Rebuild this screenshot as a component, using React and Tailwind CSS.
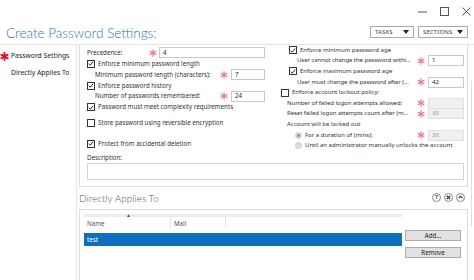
import React from 'react';

const Star = ({ red = false }) => (
  <svg width={red ? 9 : 8} height={red ? 9 : 8} viewBox="0 0 10 10" className="shrink-0">
    <g stroke={red ? '#d4142b' : '#e77d8c'} strokeWidth={red ? 2.2 : 1.6} strokeLinecap="round">
      <line x1="5" y1="1" x2="5" y2="9" />
      <line x1="1.5" y1="3" x2="8.5" y2="7" />
      <line x1="1.5" y1="7" x2="8.5" y2="3" />
    </g>
  </svg>
);

const Check = ({ on = true }) => (
  <span className="w-[8px] h-[8px] border border-[#333] bg-white flex items-center justify-center shrink-0">
    {on && (
      <svg width="7" height="7" viewBox="0 0 8 8">
        <path d="M1 4.2 L3 6.3 L7 1.5" stroke="#222" strokeWidth="1.3" fill="none" />
      </svg>
    )}
  </span>
);

const Radio = ({ on }) => (
  <span className="w-[7px] h-[7px] rounded-full bg-[#dcdcdc] border border-[#cfcfcf] flex items-center justify-center shrink-0">
    {on && <span className="w-[3px] h-[3px] rounded-full bg-[#8a8a8a]" />}
  </span>
);

const Field = ({ value, w, disabled }) => (
  <div
    className={`h-[11px] border flex items-center px-[3px] shrink-0 ${w} ${
      disabled ? 'bg-[#f0f0f0] border-[#e0e0e0] text-[#9a9a9a]' : 'bg-white border-[#c8c8c8] text-[#222]'
    }`}
  >
    {value}
  </div>
);

const CheckRow = ({ on = true, label, cls = '' }) => (
  <div className={`flex items-center gap-[3px] ${cls}`}>
    <Check on={on} />
    <span className="whitespace-nowrap">{label}</span>
  </div>
);

const RightRow = ({ label, value, disabled, indent = 'pl-[16px]' }) => (
  <div className={`h-[10.6px] flex items-center ${indent}`}>
    <span className="flex-1 min-w-0 whitespace-nowrap overflow-hidden tracking-[-0.01em]">{label}</span>
    <div className="flex items-center gap-[3px] ml-[1px]">
      <Star />
      <Field value={value} w="w-[36px]" disabled={disabled} />
    </div>
  </div>
);

const Dropdown = ({ label, w }) => (
  <div className={`h-[12px] border border-[#a8a8a8] flex items-center justify-between px-[4px] text-[6px] text-[#444] ${w}`}>
    <span className="tracking-[0.02em]">{label}</span>
    <svg width="6" height="4" viewBox="0 0 6 4">
      <path d="M0 0 H6 L3 4 Z" fill="#222" />
    </svg>
  </div>
);

export default function App() {
  return (
    <div className="w-[474px] h-[280px] bg-white overflow-hidden text-[6.2px] text-[#333] font-['Noto_Sans',sans-serif] flex flex-col">
      {/* window caption */}
      <div className="h-[22px] flex items-center justify-end pr-[3px] gap-[13px] text-[#333]">
        <svg width="9" height="9" viewBox="0 0 9 9"><line x1="0" y1="5" x2="9" y2="5" stroke="#444" strokeWidth="0.9" /></svg>
        <svg width="9" height="9" viewBox="0 0 9 9"><rect x="0.5" y="0.5" width="8" height="8" fill="none" stroke="#444" strokeWidth="0.9" /></svg>
        <svg width="9" height="9" viewBox="0 0 9 9"><path d="M0.5 0.5 L8.5 8.5 M8.5 0.5 L0.5 8.5" stroke="#444" strokeWidth="0.9" /></svg>
      </div>

      {/* header */}
      <div className="h-[22px] flex items-start justify-between pl-[6px] pr-[6px]">
        <h1 className="text-[13.5px] leading-[20px] font-light text-[#1f74c4] mt-[1px] font-['Lato',sans-serif]">Create Password Settings:</h1>
        <div className="flex gap-[4px] mt-[4px]">
          <Dropdown label="TASKS" w="w-[44px]" />
          <Dropdown label="SECTIONS" w="w-[50px]" />
        </div>
      </div>

      {/* body */}
      <div className="flex-1 flex border-t border-[#e3e3e3] min-h-0">
        <nav className="w-[77px] border-r border-[#e3e3e3] shrink-0 pt-[4px] text-[6.8px] text-[#222]">
          <div className="h-[14px] flex items-center gap-[2px]">
            <Star red />
            <span>Password Settings</span>
          </div>
          <div className="h-[14px] flex items-center pl-[11px] mt-[3px]">Directly Applies To</div>
        </nav>

        <div className="flex-1 min-w-0 flex">
          <div className="flex-1 min-w-0 pl-[2px] flex flex-col">
            {/* password settings panel */}
            <div className="h-[142px] border-x border-b border-[#dcdcdc] flex flex-col pl-[7px] pr-[3px]">
              <div className="flex h-[108px]">
                {/* left column */}
                <div className="w-[178px] shrink-0 flex flex-col pt-[2px]">
                  <div className="h-[11px] flex items-center gap-[2px]">
                    <span className="w-[62px]">Precedence:</span>
                    <Star />
                    <Field value="4" w="w-[106px]" />
                  </div>
                  <CheckRow label="Enforce minimum password length" cls="h-[11px]" />
                  <div className="h-[11px] flex items-center pl-[8px] gap-[3px]">
                    <span className="flex-1 whitespace-nowrap">Minimum password length (characters):</span>
                    <Star />
                    <Field value="7" w="w-[34px]" />
                  </div>
                  <CheckRow label="Enforce password history" cls="h-[11px]" />
                  <div className="h-[10px] flex items-center pl-[8px] gap-[3px]">
                    <span className="flex-1 whitespace-nowrap">Number of passwords remembered:</span>
                    <Star />
                    <Field value="24" w="w-[34px]" />
                  </div>
                  <CheckRow label="Password must meet complexity requirements" cls="h-[11px] mt-[0.5px]" />
                  <CheckRow on={false} label="Store password using reversible encryption" cls="h-[11px] mt-[4.5px]" />
                  <CheckRow label="Protect from accidental deletion" cls="h-[11px] mt-[10px]" />
                </div>

                {/* right column */}
                <div className="flex-1 min-w-0 flex flex-col pl-[16px] text-[6px]">
                  <CheckRow label="Enforce minimum password age" cls="h-[10.6px] pl-[8px]" />
                  <RightRow label="User cannot change the password withi..." value="1" />
                  <CheckRow label="Enforce maximum password age" cls="h-[10.6px] pl-[8px]" />
                  <RightRow label="User must change the password after (..." value="42" />
                  <CheckRow on={false} label="Enforce account lockout policy:" cls="h-[10.6px]" />
                  <RightRow label="Number of failed logon attempts allowed:" value="" disabled indent="pl-[6px]" />
                  <RightRow label="Reset failed logon attempts count after (m..." value="30" disabled indent="pl-[6px]" />
                  <div className="h-[10.6px] flex items-center pl-[6px]">Account will be locked out</div>
                  <div className="h-[10.6px] flex items-center pl-[14px]">
                    <Radio on />
                    <span className="flex-1 pl-[3px] whitespace-nowrap">For a duration of (mins):</span>
                    <div className="flex items-center gap-[3px]">
                      <Star />
                      <Field value="30" w="w-[36px]" disabled />
                    </div>
                  </div>
                  <div className="h-[10.6px] flex items-center pl-[14px] gap-[3px]">
                    <Radio />
                    <span className="whitespace-nowrap">Until an administrator manually unlocks the account</span>
                  </div>
                </div>
              </div>
              <div className="h-[10px] flex items-center">Description:</div>
              <div className="h-[17px] border border-[#d4d4d4] bg-white" />
            </div>

            {/* directly applies to */}
            <div className="h-[22px] flex items-center justify-between pr-[3px]">
              <span className="text-[10px] font-light text-[#555] font-['Lato',sans-serif]">Directly Applies To</span>
              <div className="flex gap-[3px] mt-[-2px]">
                <span className="w-[9px] h-[9px] rounded-full border border-[#888] flex items-center justify-center text-[6px] leading-none text-[#333] font-bold">?</span>
                <span className="w-[9px] h-[9px] rounded-full border border-[#888] flex items-center justify-center">
                  <svg width="5" height="5" viewBox="0 0 5 5"><path d="M0.8 0.8 L4.2 4.2 M4.2 0.8 L0.8 4.2" stroke="#222" strokeWidth="1.1" /></svg>
                </span>
                <span className="w-[9px] h-[9px] rounded-full border border-[#888] flex items-center justify-center">
                  <svg width="5" height="4" viewBox="0 0 5 4"><path d="M0.6 3.2 L2.5 1.2 L4.4 3.2" stroke="#222" strokeWidth="1.1" fill="none" /></svg>
                </span>
              </div>
            </div>
            <div className="flex-1 min-h-0 border-x border-t border-[#dcdcdc] flex items-start pl-[4px] pt-[4px] gap-[3px] pr-[6px]">
              <div className="w-[318px] shrink-0 flex flex-col">
                <div className="h-[3px] bg-[#ececec]" />
                <div className="h-[11px] flex relative text-[#555]">
                  <span className="absolute left-[42px] top-[-5px] text-[5px]">▲</span>
                  <div className="w-[87px] border-r border-[#e2e2e2] flex items-end pl-[3px]">Name</div>
                  <div className="w-[55px] border-r border-[#e2e2e2] flex items-end pl-[3px]">Mail</div>
                </div>
                <div className="h-[13px] bg-[#0f6fbf] text-white flex items-center pl-[3px] mt-[5px]">test</div>
              </div>
              <div className="flex-1 flex flex-col gap-[6px] pt-[16px]">
                <div className="h-[11px] bg-[#e1e1e1] border border-[#adadad] text-[#222] flex items-center justify-center">Add...</div>
                <div className="h-[11px] bg-[#e1e1e1] border border-[#adadad] text-[#222] flex items-center justify-center">Remove</div>
              </div>
            </div>
          </div>
          {/* scroll gutter */}
          <div className="w-[6px] flex justify-end pr-[2px] shrink-0">
            <div className="w-[1px] h-[146px] mt-[36px] bg-[#e0e0e0]" />
          </div>
        </div>
      </div>
    </div>
  );
}
